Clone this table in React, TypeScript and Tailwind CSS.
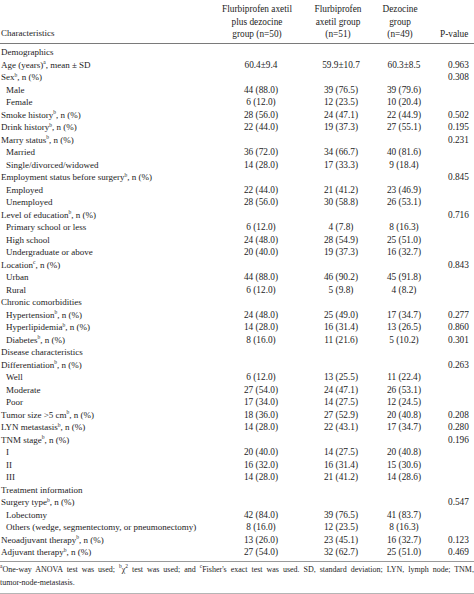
import type { ReactNode } from 'react'

type Row = { l: ReactNode; i?: boolean; v?: [string, string, string]; p?: string }

function S({ children }: { children: ReactNode }) {
  return <sup className="text-[5.5px] -top-[3.5px]">{children}</sup>
}

const rows: Row[] = [
  { l: 'Demographics' },
  { l: <>Age (years)<S>a</S>, mean ± SD</>, v: ['60.4±9.4', '59.9±10.7', '60.3±8.5'], p: '0.963' },
  { l: <>Sex<S>b</S>, n (%)</>, p: '0.308' },
  { l: 'Male', i: true, v: ['44 (88.0)', '39 (76.5)', '39 (79.6)'] },
  { l: 'Female', i: true, v: ['6 (12.0)', '12 (23.5)', '10 (20.4)'] },
  { l: <>Smoke history<S>b</S>, n (%)</>, v: ['28 (56.0)', '24 (47.1)', '22 (44.9)'], p: '0.502' },
  { l: <>Drink history<S>b</S>, n (%)</>, v: ['22 (44.0)', '19 (37.3)', '27 (55.1)'], p: '0.195' },
  { l: <>Marry status<S>b</S>, n (%)</>, p: '0.231' },
  { l: 'Married', i: true, v: ['36 (72.0)', '34 (66.7)', '40 (81.6)'] },
  { l: 'Single/divorced/widowed', i: true, v: ['14 (28.0)', '17 (33.3)', '9 (18.4)'] },
  { l: <>Employment status before surgery<S>b</S>, n (%)</>, p: '0.845' },
  { l: 'Employed', i: true, v: ['22 (44.0)', '21 (41.2)', '23 (46.9)'] },
  { l: 'Unemployed', i: true, v: ['28 (56.0)', '30 (58.8)', '26 (53.1)'] },
  { l: <>Level of education<S>b</S>, n (%)</>, p: '0.716' },
  { l: 'Primary school or less', i: true, v: ['6 (12.0)', '4 (7.8)', '8 (16.3)'] },
  { l: 'High school', i: true, v: ['24 (48.0)', '28 (54.9)', '25 (51.0)'] },
  { l: 'Undergraduate or above', i: true, v: ['20 (40.0)', '19 (37.3)', '16 (32.7)'] },
  { l: <>Location<S>c</S>, n (%)</>, p: '0.843' },
  { l: 'Urban', i: true, v: ['44 (88.0)', '46 (90.2)', '45 (91.8)'] },
  { l: 'Rural', i: true, v: ['6 (12.0)', '5 (9.8)', '4 (8.2)'] },
  { l: 'Chronic comorbidities' },
  { l: <>Hypertension<S>b</S>, n (%)</>, i: true, v: ['24 (48.0)', '25 (49.0)', '17 (34.7)'], p: '0.277' },
  { l: <>Hyperlipidemia<S>b</S>, n (%)</>, i: true, v: ['14 (28.0)', '16 (31.4)', '13 (26.5)'], p: '0.860' },
  { l: <>Diabetes<S>b</S>, n (%)</>, i: true, v: ['8 (16.0)', '11 (21.6)', '5 (10.2)'], p: '0.301' },
  { l: 'Disease characteristics' },
  { l: <>Differentiation<S>b</S>, n (%)</>, p: '0.263' },
  { l: 'Well', i: true, v: ['6 (12.0)', '13 (25.5)', '11 (22.4)'] },
  { l: 'Moderate', i: true, v: ['27 (54.0)', '24 (47.1)', '26 (53.1)'] },
  { l: 'Poor', i: true, v: ['17 (34.0)', '14 (27.5)', '12 (24.5)'] },
  { l: <>Tumor size &gt;5 cm<S>b</S>, n (%)</>, v: ['18 (36.0)', '27 (52.9)', '20 (40.8)'], p: '0.208' },
  { l: <>LYN metastasis<S>b</S>, n (%)</>, v: ['14 (28.0)', '22 (43.1)', '17 (34.7)'], p: '0.280' },
  { l: <>TNM stage<S>b</S>, n (%)</>, p: '0.196' },
  { l: 'I', i: true, v: ['20 (40.0)', '14 (27.5)', '20 (40.8)'] },
  { l: 'II', i: true, v: ['16 (32.0)', '16 (31.4)', '15 (30.6)'] },
  { l: 'III', i: true, v: ['14 (28.0)', '21 (41.2)', '14 (28.6)'] },
  { l: 'Treatment information' },
  { l: <>Surgery type<S>b</S>, n (%)</>, p: '0.547' },
  { l: 'Lobectomy', i: true, v: ['42 (84.0)', '39 (76.5)', '41 (83.7)'] },
  { l: 'Others (wedge, segmentectomy, or pneumonectomy)', i: true, v: ['8 (16.0)', '12 (23.5)', '8 (16.3)'] },
  { l: <>Neoadjuvant therapy<S>b</S>, n (%)</>, v: ['13 (26.0)', '23 (45.1)', '16 (32.7)'], p: '0.123' },
  { l: <>Adjuvant therapy<S>b</S>, n (%)</>, v: ['27 (54.0)', '32 (62.7)', '25 (51.0)'], p: '0.469' },
]

export default function App() {
  return (
    <div className="w-[474px] h-[594px] bg-white text-[#1c1c1c] overflow-hidden font-['Liberation_Serif','Times_New_Roman',serif] text-[9.3px] leading-[12.5px]">
      {/* header */}
      <div className="grid grid-cols-[218px_78px_84px_40px_1fr] items-end pt-[3px] pb-[2px] border-b border-[#7a7a7a]">
        <div className="pl-[1px] pb-[1px] text-[9px]">Characteristics</div>
        <div className="text-center">Flurbiprofen axetil<br />plus dezocine<br />group (n=50)</div>
        <div className="text-center">Flurbiprofen<br />axetil group<br />(n=51)</div>
        <div className="text-center">Dezocine<br />group<br />(n=49)</div>
        <div className="pl-[20px]">P-value</div>
      </div>

      {/* body */}
      <div className="pt-[2.5px] pb-[2px]">
        {rows.map((r, k) => (
          <div key={k} className="grid grid-cols-[222px_78px_82px_44px_1fr] h-[12.5px] whitespace-nowrap">
            <div className={`text-[9px] ${r.i ? 'pl-[6px]' : 'pl-[1px]'}`}>{r.l}</div>
            <div className="text-center">{r.v?.[0]}</div>
            <div className="text-center">{r.v?.[1]}</div>
            <div className="text-center">{r.v?.[2]}</div>
            <div className="pl-[22px]">{r.p}</div>
          </div>
        ))}
      </div>

      {/* footnote */}
      <div className="border-t-[1.5px] border-[#9a9a9a] pt-[1px] pb-[3px] text-[8px] leading-[13.5px]">
        <div className="text-justify [text-align-last:justify]">
          <S>a</S>One-way ANOVA test was used; <S>b</S>χ<S>2</S> test was used; and <S>c</S>Fisher's exact test was used. SD, standard deviation; LYN, lymph node; TNM,
        </div>
        <div>tumor-node-metastasis.</div>
      </div>
      <div className="h-[2px] bg-[#b5b5b5]" />
    </div>
  )
}
